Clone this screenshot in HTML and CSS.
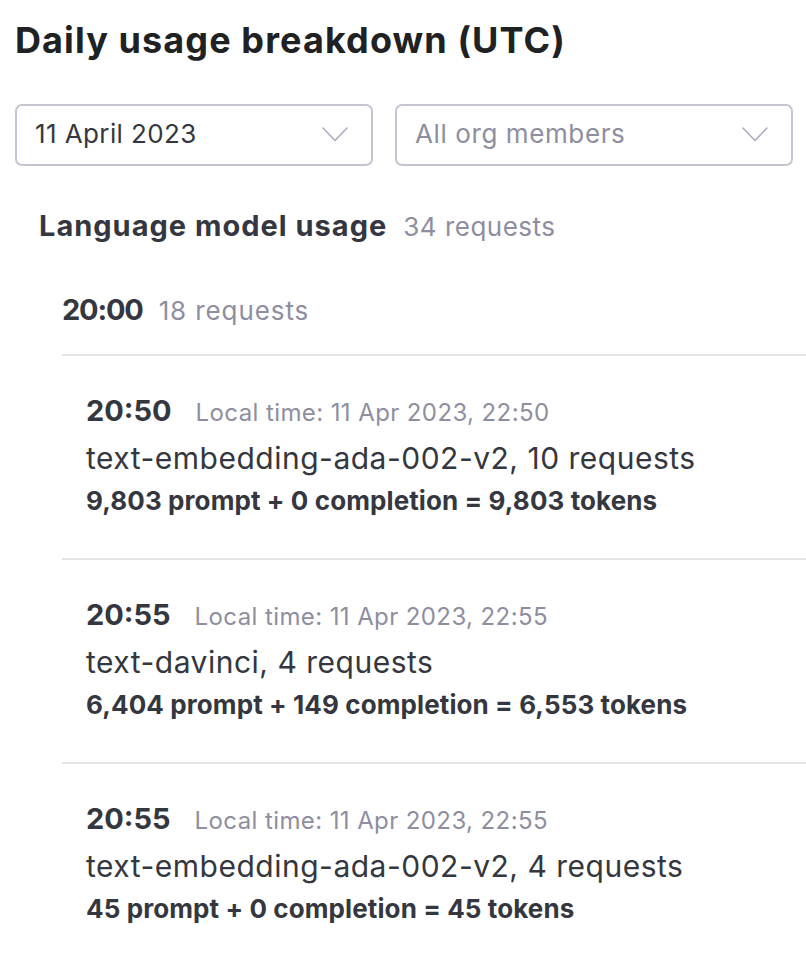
FILE: index.html
```html
<!DOCTYPE html>
<html>
<head>
<meta charset="utf-8">
<link rel="stylesheet" href="styles.css">
</head>
<body>
<div class="page">
  <h1 class="title">Daily usage breakdown (UTC)</h1>
  <div class="filters">
    <div class="select">
      <span class="select-value">11 April 2023</span>
      <svg class="chevron" width="26" height="15" viewBox="0 0 26 15"><path d="M1 1 L13 13.5 L25 1" fill="none" stroke="#acacbe" stroke-width="1.6" stroke-linecap="round" stroke-linejoin="round"/></svg>
    </div>
    <div class="select">
      <span class="select-placeholder">All org members</span>
      <svg class="chevron" width="26" height="15" viewBox="0 0 26 15"><path d="M1 1 L13 13.5 L25 1" fill="none" stroke="#acacbe" stroke-width="1.6" stroke-linecap="round" stroke-linejoin="round"/></svg>
    </div>
  </div>
  <div class="section">
    <div class="section-head">
      <span class="section-title">Language model usage</span>
      <span class="count">34 requests</span>
    </div>
    <div class="hour">
      <div class="hour-head">
        <span class="hour-title">20:00</span>
        <span class="count count-hour">18 requests</span>
      </div>
      <div class="entries">
        <div class="entry">
          <div class="entry-head"><span class="entry-time">20:50</span><span class="local">Local time: 11 Apr 2023, 22:50</span></div>
          <div class="entry-model">text-embedding-ada-002-v2, 10 requests</div>
          <div class="entry-tokens">9,803 prompt + 0 completion = 9,803 tokens</div>
        </div>
        <div class="entry">
          <div class="entry-head"><span class="entry-time">20:55</span><span class="local">Local time: 11 Apr 2023, 22:55</span></div>
          <div class="entry-model">text-davinci, 4 requests</div>
          <div class="entry-tokens">6,404 prompt + 149 completion = 6,553 tokens</div>
        </div>
        <div class="entry">
          <div class="entry-head"><span class="entry-time">20:55</span><span class="local">Local time: 11 Apr 2023, 22:55</span></div>
          <div class="entry-model">text-embedding-ada-002-v2, 4 requests</div>
          <div class="entry-tokens">45 prompt + 0 completion = 45 tokens</div>
        </div>
      </div>
    </div>
  </div>
</div>
</body>
</html>
```
FILE: styles.css
```css
* { box-sizing: border-box; }
html, body { margin: 0; padding: 0; background: #ffffff; }
body {
  font-family: Inter, "Noto Sans", "Liberation Sans", sans-serif;
  color: #353740;
  overflow: hidden;
}
.page { padding: 16px 0 0 15px; }
.title {
  margin: 0;
  font-size: 36px;
  line-height: 48px;
  font-weight: 700;
  color: #202123;
  letter-spacing: 1.1px;
}
.filters {
  display: grid;
  grid-template-columns: 358px 398px;
  gap: 22px;
  margin-top: 40px;
}
.select {
  height: 62px;
  border: 2px solid #c5c5d2;
  border-radius: 7px;
  display: flex;
  align-items: center;
  justify-content: space-between;
  padding: 0 23px 3px 18px;
  font-size: 26px;
}
.select-value { color: #353740; letter-spacing: 0.4px; }
.select-placeholder { color: #8e8ea0; letter-spacing: 0.6px; }
.chevron { display: block; margin-top: 2px; }
.count { color: #8e8ea0; font-weight: 400; font-size: 26px; letter-spacing: 0.5px; }
.count-hour { letter-spacing: 0.9px; }
.section { padding-left: 24px; margin-top: 40px; }
.section-head { display: flex; align-items: baseline; gap: 16px; }
.section-title { font-size: 29px; font-weight: 700; color: #353740; line-height: 40px; letter-spacing: 1px; }
.hour { padding-left: 23px; margin-top: 44px; }
.hour-head { display: flex; align-items: baseline; gap: 16px; padding-bottom: 24px; border-bottom: 2px solid #e5e5e5; }
.hour-title { font-size: 29px; font-weight: 700; line-height: 40px; letter-spacing: -1.2px; }
.entry { padding: 35px 0 39px 24px; border-bottom: 2px solid #e5e5e5; }
.entry:last-child { border-bottom: none; }
.entry-head { display: flex; align-items: baseline; gap: 24px; }
.entry-time { font-size: 29px; font-weight: 700; line-height: 40px; letter-spacing: 0; }
.local { font-size: 24px; color: #8e8ea0; letter-spacing: 0.4px; }
.entry-model { font-size: 30px; line-height: 40px; margin-top: 7px; letter-spacing: 0.5px; }
.entry-tokens { font-size: 26px; font-weight: 700; line-height: 36px; margin-top: 5px; letter-spacing: 0.1px; }
```
